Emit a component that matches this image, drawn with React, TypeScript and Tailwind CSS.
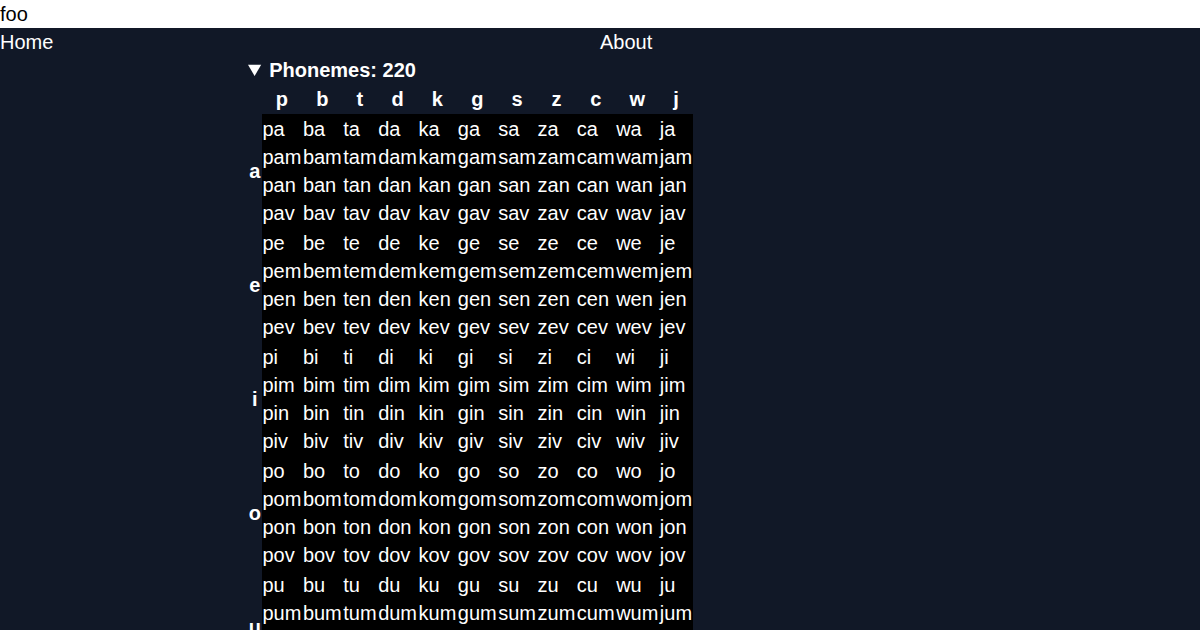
const consonants = ["p", "b", "t", "d", "k", "g", "s", "z", "c", "w", "j"];
const vowels = ["a", "e", "i", "o", "u"];
const codas = ["", "m", "n", "v"];

export default function App() {
  return (
    <div className="min-h-screen bg-[#111827] text-white text-xl font-['Liberation_Sans',Arial,sans-serif]">
      <header className="bg-white text-black h-7 leading-7">foo</header>

      <nav className="grid grid-cols-2 leading-7">
        <a href="#">Home</a>
        <a href="#">About</a>
      </nav>

      <div className="ml-[248px]">
        <details open>
          <summary className="font-bold leading-7 cursor-pointer">Phonemes: {consonants.length * vowels.length * codas.length}</summary>
          <table className="leading-7">
            <thead>
              <tr>
                <th className="py-px px-[0.75px]"></th>
                {consonants.map((c) => (
                  <th key={c} className="py-px px-[0.75px] font-bold text-center">
                    {c}
                  </th>
                ))}
              </tr>
            </thead>
            <tbody>
              {vowels.map((v) => (
                <tr key={v}>
                  <th className="py-px px-[0.75px] font-bold align-middle">{v}</th>
                  {consonants.map((c) => (
                    <td key={c} className="bg-black py-px px-[0.75px] text-left align-top">
                      {codas.map((coda) => (
                        <div key={coda}>{c + v + coda}</div>
                      ))}
                    </td>
                  ))}
                </tr>
              ))}
            </tbody>
          </table>
        </details>
      </div>
    </div>
  );
}
